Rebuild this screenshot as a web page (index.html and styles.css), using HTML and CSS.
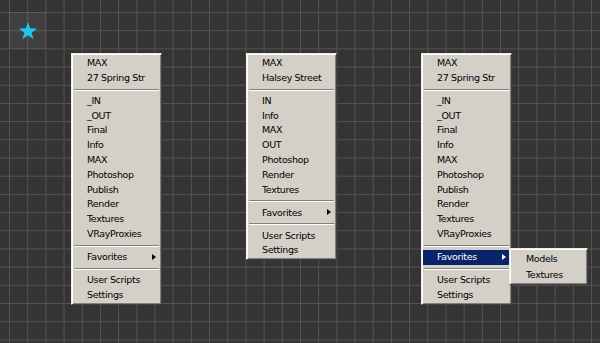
FILE: index.html
```html
<!DOCTYPE html>
<html>
<head>
<meta charset="utf-8">
<link rel="stylesheet" href="styles.css">
</head>
<body>
<div class="canvas">
  <div class="star-tile">
    <svg class="star" viewBox="0 0 20 20" width="20" height="19"><polygon points="10,1 12.35,7.76 19.51,7.91 13.8,12.24 15.88,19.09 10,15 4.12,19.09 6.2,12.24 0.49,7.91 7.65,7.76" fill="#22c3ee"/></svg>
  </div>
  <div class="menus">
    <div class="menu">
      <div class="item">MAX</div>
      <div class="item">27 Spring Str</div>
      <div class="sep"><span></span></div>
      <div class="item">_IN</div>
      <div class="item">_OUT</div>
      <div class="item">Final</div>
      <div class="item">Info</div>
      <div class="item">MAX</div>
      <div class="item">Photoshop</div>
      <div class="item">Publish</div>
      <div class="item">Render</div>
      <div class="item">Textures</div>
      <div class="item">VRayProxies</div>
      <div class="sep"><span></span></div>
      <div class="item sub">Favorites<i class="arrow"></i></div>
      <div class="sep"><span></span></div>
      <div class="item">User Scripts</div>
      <div class="item">Settings</div>
    </div>
    <div class="menu">
      <div class="item">MAX</div>
      <div class="item">Halsey Street</div>
      <div class="sep"><span></span></div>
      <div class="item">IN</div>
      <div class="item">Info</div>
      <div class="item">MAX</div>
      <div class="item">OUT</div>
      <div class="item">Photoshop</div>
      <div class="item">Render</div>
      <div class="item">Textures</div>
      <div class="sep"><span></span></div>
      <div class="item sub">Favorites<i class="arrow"></i></div>
      <div class="sep"><span></span></div>
      <div class="item">User Scripts</div>
      <div class="item">Settings</div>
    </div>
    <div class="menu">
      <div class="item">MAX</div>
      <div class="item">27 Spring Str</div>
      <div class="sep"><span></span></div>
      <div class="item">_IN</div>
      <div class="item">_OUT</div>
      <div class="item">Final</div>
      <div class="item">Info</div>
      <div class="item">MAX</div>
      <div class="item">Photoshop</div>
      <div class="item">Publish</div>
      <div class="item">Render</div>
      <div class="item">Textures</div>
      <div class="item">VRayProxies</div>
      <div class="sep"><span></span></div>
      <div class="item sub active">Favorites<i class="arrow"></i>
        <div class="menu submenu">
          <div class="item">Models</div>
          <div class="item">Textures</div>
        </div>
      </div>
      <div class="sep"><span></span></div>
      <div class="item">User Scripts</div>
      <div class="item">Settings</div>
    </div>
  </div>
</div>
</body>
</html>
```
FILE: styles.css
```css
html, body {
  margin: 0;
  padding: 0;
}
body {
  width: 600px;
  height: 343px;
  overflow: hidden;
  background: #343434;
}
.canvas {
  position: relative;
  width: 600px;
  height: 343px;
  background-color: #343434;
  background-image:
    linear-gradient(to right, #545454 1px, transparent 1px),
    linear-gradient(to bottom, #545454 1px, transparent 1px);
  background-size: 18.2px 18.2px;
  background-position: 9px 12px;
  font-family: "DejaVu Sans", sans-serif;
  font-size: 9.5px;
  letter-spacing: -0.35px;
  color: #000000;
}
.star-tile {
  position: absolute;
  left: 9px;
  top: 12px;
  width: 37px;
  height: 37px;
  background: rgba(255, 255, 255, 0.06);
  display: flex;
  align-items: center;
  justify-content: center;
}
.star {
  display: block;
  margin-top: -1px;
}
.menus {
  display: flex;
  align-items: flex-start;
  gap: 84px;
  padding: 53px 0 0 71px;
}
.menu {
  width: 91px;
  box-sizing: border-box;
  background: #d4d0c8;
  border: 1px solid;
  border-color: #ecebe6 #404040 #404040 #ecebe6;
  box-shadow: inset 1px 1px #ffffff, inset -1px -1px #808080;
  padding: 2px 1px 1px 1px;
}
.item {
  position: relative;
  height: 14.8px;
  line-height: 14.8px;
  padding-left: 14px;
  white-space: nowrap;
}
.sep {
  height: 8.2px;
  display: flex;
  align-items: center;
  padding: 0 1px;
}
.sep span {
  display: block;
  flex: 1;
  border-top: 1px solid #808080;
  border-bottom: 1px solid #ffffff;
}
.arrow {
  position: absolute;
  right: 4px;
  top: 50%;
  margin-top: -3.5px;
  width: 0;
  height: 0;
  border-left: 4px solid #000;
  border-top: 3.5px solid transparent;
  border-bottom: 3.5px solid transparent;
}
.active {
  background: #0a246a;
  color: #ffffff;
}
.active .arrow {
  border-left-color: #ffffff;
}
.submenu {
  position: absolute;
  left: calc(100% - 1px);
  top: -2px;
  width: 79px;
  color: #000000;
  padding: 2px 1px 1px 1px;
}
.submenu .item {
  height: 16px;
  line-height: 16px;
  padding-left: 15px;
}
```
